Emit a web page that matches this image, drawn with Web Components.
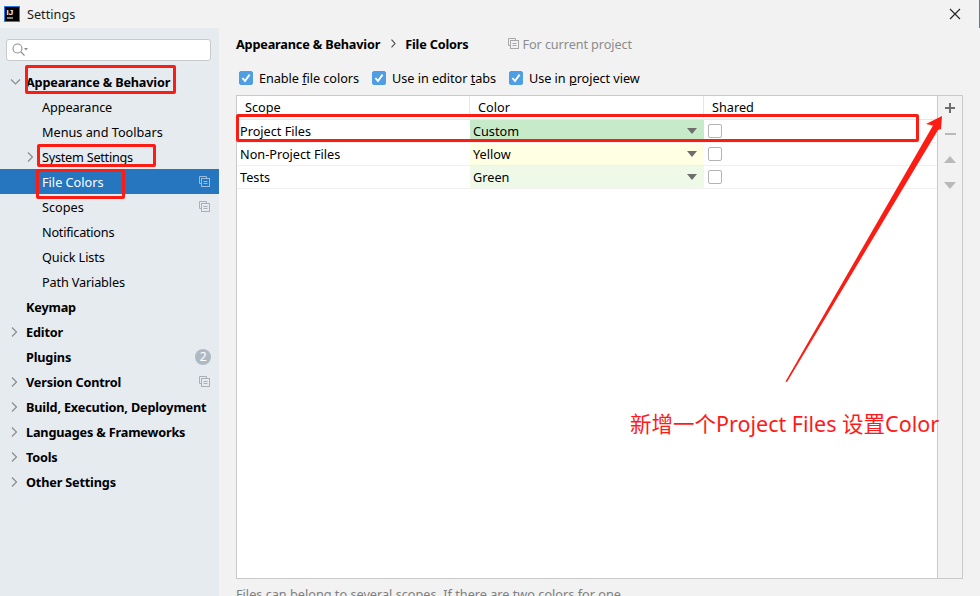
<!DOCTYPE html>
<html>
<head>
<meta charset="utf-8">
<title>Settings</title>
<style>
  html, body { margin: 0; padding: 0; background: #f2f2f2; overflow: hidden; }
  body { font: 12.7px "Noto Sans", "Noto Sans CJK SC", sans-serif; color: #000; }
</style>
</head>
<body>

<settings-window>
  <settings-tree slot="side">
    <tree-row bold expanded level="0">Appearance &amp; Behavior</tree-row>
    <tree-row level="1" style="letter-spacing:-.1px">Appearance</tree-row>
    <tree-row level="1">Menus and Toolbars</tree-row>
    <tree-row level="1" collapsed style="letter-spacing:-.25px">System Settings</tree-row>
    <tree-row level="1" selected copy>File Colors</tree-row>
    <tree-row level="1" copy>Scopes</tree-row>
    <tree-row level="1" style="letter-spacing:-.25px">Notifications</tree-row>
    <tree-row level="1" style="letter-spacing:-.1px">Quick Lists</tree-row>
    <tree-row level="1" style="letter-spacing:-.15px">Path Variables</tree-row>
    <tree-row bold level="0">Keymap</tree-row>
    <tree-row bold level="0" collapsed>Editor</tree-row>
    <tree-row bold level="0" badge="2">Plugins</tree-row>
    <tree-row bold level="0" collapsed copy>Version Control</tree-row>
    <tree-row bold level="0" collapsed>Build, Execution, Deployment</tree-row>
    <tree-row bold level="0" collapsed>Languages &amp; Frameworks</tree-row>
    <tree-row bold level="0" collapsed>Tools</tree-row>
    <tree-row bold level="0" collapsed>Other Settings</tree-row>
  </settings-tree>

  <file-colors-panel slot="main">
    <scope-row scope="Project Files" color="Custom" tint="#c7ebc9"></scope-row>
    <scope-row scope="Non-Project Files" color="Yellow" tint="#ffffe4"></scope-row>
    <scope-row scope="Tests" color="Green" tint="#eff9e8"></scope-row>
  </file-colors-panel>

  <red-annotations slot="over"></red-annotations>
</settings-window>

<script>
const copyIcon = (c) => `<svg width="11" height="11" viewBox="0 0 11 11" fill="none" stroke="${c}" stroke-width="1"><path d="M7.5 2.5V.5H.5v7h2"/><rect x="2.5" y="2.5" width="8" height="8"/><path d="M4.5 5.5h4M4.5 7.5h4"/></svg>`;

class SettingsWindow extends HTMLElement {
    constructor() {
        super();
        this.attachShadow({ mode: "open" });
        this.shadowRoot.innerHTML = `
      <style>
        :host{
            display:block;
            position:relative;
            width:980px;
            height:596px;
            overflow:hidden;
            background:#f2f2f2;
        }
        .title{
            height:28px;
            display:flex;
            align-items:center;
            padding-left:4px;
            gap:7px;
            box-sizing:border-box;
            border-right:1px solid #6a7a80;
        }
        .title span{ color:#1a1a1a; }
        .close{ margin-left:auto; margin-right:18px; display:block; }
        .body{
            display:grid;
            grid-template-columns:219px 1fr;
            height:568px;
        }
      </style>
      <div class="title">
        <svg width="16" height="16" viewBox="0 0 16 16">
          <rect x=".5" y=".5" width="15" height="15" fill="#000" stroke="#1f7fe0"/>
          <text x="2.6" y="9" font-family="Liberation Sans, sans-serif" font-size="8" font-weight="700" fill="#fff">IJ</text>
          <rect x="3" y="11.5" width="6" height="1" fill="#fff"/>
        </svg>
        <span>Settings</span>
        <svg class="close" width="12" height="12" viewBox="0 0 12 12" stroke="#222" stroke-width="1.1"><path d="M1 1l10 10M11 1L1 11"/></svg>
      </div>
      <div class="body">
        <slot name="side"></slot>
        <slot name="main"></slot>
      </div>
      <slot name="over"></slot>
    `;
    }
}

class SettingsTree extends HTMLElement {
    constructor() {
        super();
        this.attachShadow({ mode: "open" });
        this.shadowRoot.innerHTML = `
      <style>
        :host{
            display:block;
            background:#e6ebf0;
            padding-top:11px;
            box-sizing:border-box;
        }
        .search{
            margin:0 8px 8px 6px;
            height:22px;
            box-sizing:border-box;
            background:#fff;
            border:1px solid #c9c9c9;
            border-radius:3px;
            display:flex;
            align-items:center;
            padding-left:5px;
        }
      </style>
      <div class="search">
        <svg width="16" height="14" viewBox="0 0 16 14" fill="none" stroke="#8c8c8c" stroke-width="1.1">
          <circle cx="5.5" cy="5.5" r="4.5"/><path d="M9 9l3.5 3.5"/>
          <path d="M12 5h4l-2 2.4z" fill="#8c8c8c" stroke="none"/>
        </svg>
      </div>
      <slot></slot>
    `;
    }
}

class TreeRow extends HTMLElement {
    constructor() {
        super();
        this.attachShadow({ mode: "open" });
    }

    connectedCallback() {
        const level = Number(this.getAttribute("level") ?? 0);
        const bold = this.hasAttribute("bold");
        const selected = this.hasAttribute("selected");
        const expanded = this.hasAttribute("expanded");
        const collapsed = this.hasAttribute("collapsed");
        const badge = this.getAttribute("badge");
        const copy = this.hasAttribute("copy");
        const chevronLeft = level === 0 ? 11 : 27;

        let chevron = "";
        if (expanded) chevron = `<svg class="chev" style="left:${chevronLeft - 1}px" width="11" height="7" viewBox="0 0 11 7" fill="none" stroke="#8c8c8c" stroke-width="1.2"><path d="M1 1l4.5 4.5L10 1"/></svg>`;
        if (collapsed) chevron = `<svg class="chev" style="left:${chevronLeft}px" width="7" height="11" viewBox="0 0 7 11" fill="none" stroke="#8c8c8c" stroke-width="1.2"><path d="M1 1l4.5 4.5L1 10"/></svg>`;

        this.shadowRoot.innerHTML = `
      <style>
        :host{
            display:block;
            height:25px;
        }
        .row{
            height:25px;
            display:flex;
            align-items:center;
            position:relative;
            padding-left:${level === 0 ? 26 : 42}px;
            padding-right:9px;
            font-weight:${bold ? 700 : 400};
            ${bold ? "letter-spacing:-0.18px;" : ""}
            color:${selected ? "#fff" : "#000"};
            background:${selected ? "#2675bf" : "transparent"};
            white-space:nowrap;
        }
        .chev{ position:absolute; top:50%; transform:translateY(-50%); }
        .end{ margin-left:auto; display:flex; }
        .badge{
            width:16px;
            height:16px;
            border-radius:50%;
            background:#afb9c3;
            color:#fff;
            font-size:12px;
            font-weight:400;
            display:flex;
            align-items:center;
            justify-content:center;
            margin-right:-1px;
        }
      </style>
      <div class="row">
        ${chevron}
        <span><slot></slot></span>
        ${copy ? `<span class="end">${copyIcon(selected ? "#9bbede" : "#a9b1b8")}</span>` : ""}
        ${badge ? `<span class="end"><span class="badge">${badge}</span></span>` : ""}
      </div>
    `;
    }
}

class IdeCheck extends HTMLElement {
    constructor() {
        super();
        this.attachShadow({ mode: "open" });
    }

    connectedCallback() {
        const checked = this.hasAttribute("checked");
        this.shadowRoot.innerHTML = `
      <style>
        :host{
            display:inline-flex;
            align-items:center;
            gap:6px;
            white-space:nowrap;
            letter-spacing:-0.05px;
        }
        .box{
            width:14px;
            height:14px;
            box-sizing:border-box;
            border-radius:2px;
            display:block;
            background:${checked ? "#4f9ee3" : "#fff"};
            border:1px solid ${checked ? "#4f9ee3" : "#b0b0b0"};
        }
      </style>
      <span class="box">${checked ? `<svg width="12" height="12" viewBox="0 0 12 12" fill="none" stroke="#fff" stroke-width="1.9" style="display:block"><path d="M2.4 6l2.6 3 4.6-6.4"/></svg>` : ""}</span>
      <span><slot></slot></span>
    `;
    }
}

class ScopeRow extends HTMLElement {
    constructor() {
        super();
        this.attachShadow({ mode: "open" });
    }

    connectedCallback() {
        const scope = this.getAttribute("scope") ?? "";
        const color = this.getAttribute("color") ?? "";
        const tint = this.getAttribute("tint") ?? "#fff";
        this.shadowRoot.innerHTML = `
      <style>
        :host{
            display:grid;
            grid-template-columns:233px 234px 1fr;
            height:23px;
            box-sizing:border-box;
            border-bottom:1px solid #f0f0f0;
        }
        div{ display:flex; align-items:center; padding-left:3px; }
        .color{ background:${tint}; padding-left:3px; padding-right:7px; justify-content:space-between; }
        .shared{ padding-left:4px; }
        .box{ width:14px; height:14px; box-sizing:border-box; background:#fff; border:1px solid #b4b4b4; border-radius:2px; }
        svg{ display:block; }
      </style>
      <div>${scope}</div>
      <div class="color">${color}
        <svg width="10" height="6" viewBox="0 0 10 6"><path d="M0 0h10L5 6z" fill="#6e6e6e"/></svg>
      </div>
      <div class="shared"><span class="box"></span></div>
    `;
    }
}

class FileColorsPanel extends HTMLElement {
    constructor() {
        super();
        this.attachShadow({ mode: "open" });
        this.shadowRoot.innerHTML = `
      <style>
        :host{
            display:block;
            padding:4px 17px 0 17px;
            box-sizing:border-box;
        }
        .crumbs{
            height:23px;
            display:flex;
            align-items:center;
            font-weight:700;
            white-space:nowrap;
        }
        .crumbs > span:not(.scope){ letter-spacing:-0.18px; }
        .crumbs svg{ margin:0 9px 0 11px; }
        .crumbs .scope svg{ margin:0; }
        .scope{
            margin-left:40px;
            display:flex;
            align-items:center;
            gap:3px;
            font-weight:400;
            color:#8c8c8c;
            letter-spacing:-0.1px;
        }
        .checks{
            height:22px;
            margin-top:12px;
            padding-left:3px;
            display:flex;
            align-items:center;
            gap:13px;
        }
        .frame{
            margin-top:6px;
            width:727px;
            height:484px;
            box-sizing:border-box;
            border:1px solid #c9c9c9;
            display:grid;
            grid-template-columns:1fr 25px;
        }
        .table{ background:#fff; }
        .head{
            display:grid;
            grid-template-columns:233px 234px 1fr;
            height:24px;
            box-sizing:border-box;
            padding-bottom:1px;
            border-bottom:1px solid #e6e6e6;
        }
        .head div{ display:flex; align-items:center; padding-left:8px; border-left:1px solid #e6e6e6; }
        .head div:first-child{ border-left:0; }
        .head div + div{ margin-left:-1px; }
        .tools{
            border-left:1px solid #c9c9c9;
            display:flex;
            flex-direction:column;
            align-items:center;
        }
        .tools span{ height:25.5px; display:flex; align-items:center; justify-content:center; }
        .tools .plus{ margin-top:-2px; }
        .note{
            margin-top:6px;
            color:#7f7f7f;
            white-space:nowrap;
        }
      </style>
      <div class="crumbs">
        <span>Appearance &amp; Behavior</span>
        <svg width="5" height="9" viewBox="0 0 5 9" fill="none" stroke="#444" stroke-width="1.1"><path d="M.5 .7l3.5 3.8L.5 8.3"/></svg>
        <span>File Colors</span>
        <span class="scope">${copyIcon("#a8a8a8")}<span>For current project</span></span>
      </div>
      <div class="checks">
        <ide-check checked>Enable <u>f</u>ile colors</ide-check>
        <ide-check checked>Use in editor <u>t</u>abs</ide-check>
        <ide-check checked>Use in <u>p</u>roject view</ide-check>
      </div>
      <div class="frame">
        <div class="table">
          <div class="head"><div>Scope</div><div>Color</div><div>Shared</div></div>
          <slot></slot>
        </div>
        <div class="tools">
          <span><svg class="plus" width="12" height="12" viewBox="0 0 12 12" fill="#6e6e6e"><path d="M5 1h2v4h4v2H7v4H5V7H1V5h4z"/></svg></span>
          <span><svg width="11" height="2" viewBox="0 0 11 2" fill="#b9b9b9"><rect width="11" height="2"/></svg></span>
          <span><svg width="12" height="7" viewBox="0 0 12 7" fill="#b9b9b9"><path d="M6 0l6 7H0z"/></svg></span>
          <span><svg width="12" height="7" viewBox="0 0 12 7" fill="#b9b9b9"><path d="M0 0h12L6 7z"/></svg></span>
        </div>
      </div>
      <div class="note">Files can belong to several scopes. If there are two colors for one</div>
    `;
    }
}

class RedAnnotations extends HTMLElement {
    constructor() {
        super();
        this.attachShadow({ mode: "open" });
        this.shadowRoot.innerHTML = `
      <style>
        :host{ position:absolute; inset:0; display:block; pointer-events:none; }
        .mark{
            position:absolute;
            box-sizing:border-box;
            border:3px solid #fb1d14;
            border-radius:2px;
        }
        svg{ position:absolute; left:0; top:0; }
        .note{
            position:absolute;
            left:630px;
            top:408px;
            font:21.5px "Noto Sans", "Noto Sans CJK SC", sans-serif;
            line-height:31px;
            color:#ff1a1a;
            white-space:nowrap;
        }
      </style>
      <div class="mark" style="left:25px;top:65px;width:151px;height:29px"></div>
      <div class="mark" style="left:37px;top:144px;width:119px;height:23px"></div>
      <div class="mark" style="left:36px;top:169px;width:89px;height:30px"></div>
      <div class="mark" style="left:236px;top:114px;width:683px;height:28px"></div>
      <svg width="980" height="596" viewBox="0 0 980 596">
        <path d="M942 116L926 124L933 125.5L785.5 381.5L787 382L938 130L941 129z" fill="#fb1d14"/>
      </svg>
      <div class="note">新增一个Project Files 设置Color</div>
    `;
    }
}

customElements.define("settings-window", SettingsWindow);
customElements.define("settings-tree", SettingsTree);
customElements.define("tree-row", TreeRow);
customElements.define("ide-check", IdeCheck);
customElements.define("scope-row", ScopeRow);
customElements.define("file-colors-panel", FileColorsPanel);
customElements.define("red-annotations", RedAnnotations);
</script>
</body>
</html>
